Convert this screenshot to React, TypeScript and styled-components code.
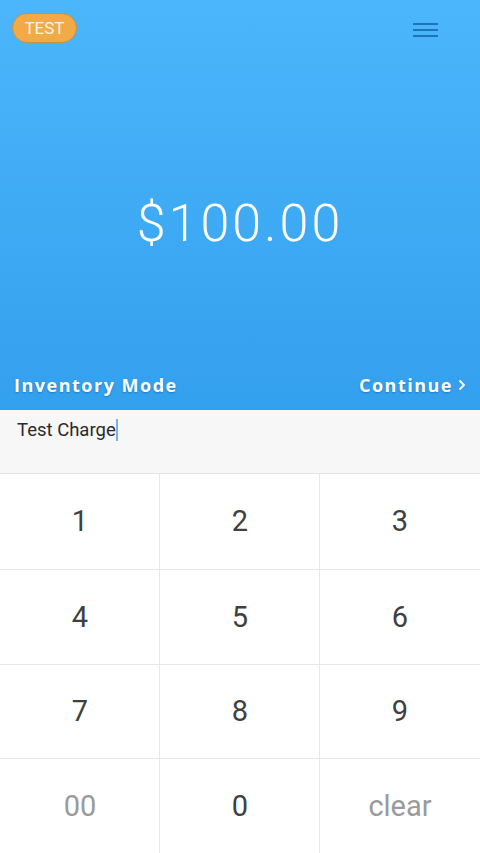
import styled, { createGlobalStyle } from "styled-components";

const GlobalStyle = createGlobalStyle`
	html, body {
		margin: 0;
		padding: 0;
		background: #ffffff;
	}
	body {
		font-family: "Roboto", "Liberation Sans", sans-serif;
	}
`;

const Screen = styled.div`
	width: 480px;
	height: 853px;
	display: flex;
	flex-direction: column;
	overflow: hidden;
`;

const Header = styled.div`
	height: 410px;
	display: flex;
	flex-direction: column;
	background: linear-gradient(to bottom, #4cb6fc, #33a0ee);
`;

const TopBar = styled.div`
	display: flex;
	justify-content: space-between;
	align-items: center;
	padding: 13px 42px 0 12px;
`;

const TestBadge = styled.div`
	width: 63px;
	height: 28px;
	border-radius: 15px;
	border: 1px solid #c8913f;
	background: #f2aa46;
	color: #fff6e6;
	font-size: 17px;
	display: flex;
	align-items: center;
	justify-content: center;
`;

const MenuButton = styled.div`
	width: 25px;
	display: flex;
	flex-direction: column;
	gap: 4px;
	padding-top: 3px;
`;

const MenuLine = styled.span`
	display: block;
	height: 2px;
	background: #1d74b6;
`;

const Amount = styled.div`
	flex: 1;
	display: flex;
	align-items: center;
	justify-content: center;
	color: #ffffff;
	font-size: 52px;
	font-weight: 300;
	letter-spacing: 3px;
	padding-top: 30px;
`;

const BottomBar = styled.div`
	display: flex;
	justify-content: space-between;
	align-items: center;
	padding: 0 14px 13px 14px;
`;

const BarLink = styled.span`
	color: #ffffff;
	font-family: "Open Sans", "Liberation Sans", sans-serif;
	font-size: 18px;
	font-weight: 700;
	letter-spacing: 1.5px;
	text-shadow: 0 1px 2px rgba(0, 40, 90, 0.35);
	display: flex;
	align-items: center;
	gap: 5px;
`;

const Note = styled.div`
	height: 64px;
	background: #f7f7f7;
	border-bottom: 1px solid #e4e4e4;
	padding: 9px 17px 0;
	box-sizing: border-box;
	font-size: 18.5px;
	color: #2a2a2a;
	display: flex;
	align-items: flex-start;
`;

const Caret = styled.span`
	display: inline-block;
	width: 2px;
	height: 22px;
	background: #5a9ee0;
	opacity: 0.8;
`;

const Keypad = styled.div`
	flex: 1;
	display: grid;
	grid-template-columns: 160px 160px 160px;
	grid-template-rows: repeat(4, 1fr);
`;

const Key = styled.div<{ muted?: boolean; col: number; row: number }>`
	display: flex;
	align-items: center;
	justify-content: center;
	font-size: 29px;
	color: ${(p) => (p.muted ? "#9a9a9a" : "#404040")};
	border-left: ${(p) => (p.col > 0 ? "1px solid #e8e8e8" : "none")};
	border-top: ${(p) => (p.row > 0 ? "1px solid #e8e8e8" : "none")};
	margin-left: ${(p) => (p.col > 0 ? "-1px" : "0")};
`;

const keys = ["1", "2", "3", "4", "5", "6", "7", "8", "9", "00", "0", "clear"];

function App() {
	return (
		<>
			<GlobalStyle />
			<Screen>
				<Header>
					<TopBar>
						<TestBadge>TEST</TestBadge>
						<MenuButton>
							<MenuLine />
							<MenuLine />
							<MenuLine />
						</MenuButton>
					</TopBar>
					<Amount>$100.00</Amount>
					<BottomBar>
						<BarLink>Inventory Mode</BarLink>
						<BarLink>
							Continue
							<svg width="8" height="12" viewBox="0 0 8 12">
								<path
									d="M1.5 1.5 L6 6 L1.5 10.5"
									fill="none"
									stroke="#ffffff"
									strokeWidth="1.8"
								/>
							</svg>
						</BarLink>
					</BottomBar>
				</Header>
				<Note>
					Test Charge
					<Caret />
				</Note>
				<Keypad>
					{keys.map((k, i) => (
						<Key
							key={k}
							col={i % 3}
							row={Math.floor(i / 3)}
							muted={k === "00" || k === "clear"}
						>
							{k}
						</Key>
					))}
				</Keypad>
			</Screen>
		</>
	);
}

export default App;
